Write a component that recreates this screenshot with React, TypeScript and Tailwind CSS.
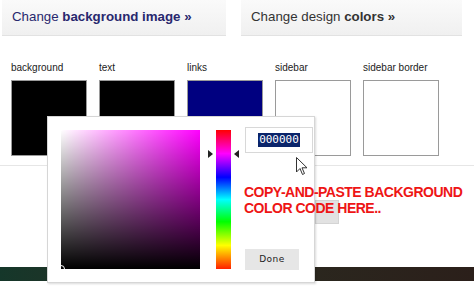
import React from "react";

const swatches = [
  { label: "background", color: "bg-black" },
  { label: "text", color: "bg-black" },
  { label: "links", color: "bg-[#000080]" },
  { label: "sidebar", color: "bg-white" },
  { label: "sidebar border", color: "bg-white" },
];

export default function App() {
  return (
    <div className="relative w-[474px] h-[288px] overflow-hidden bg-white font-['Liberation_Sans',Arial,sans-serif]">
      {/* tabs */}
      <div className="flex h-[36px]">
        <div className="ml-[2px] w-[224px] flex items-center pl-[10px] pb-[2px] bg-gradient-to-b from-[#fafafa] to-[#f0f0f0] border-b border-[#e2e2e2] text-[13.3px] text-[#28286e]">
          Change&nbsp;<b>background image »</b>
        </div>
        <div className="ml-[15px] w-[221px] flex items-center pl-[10px] pb-[2px] bg-gradient-to-b from-[#fafafa] to-[#f0f0f0] border-b border-[#e2e2e2] text-[13.3px] text-[#333]">
          Change design&nbsp;<b>colors »</b>
        </div>
      </div>

      {/* swatches */}
      <div className="flex gap-[12px] pl-[11px] pt-[26px]">
        {swatches.map((s) => (
          <div key={s.label} className="flex flex-col w-[76px]">
            <div className="text-[10px] leading-[12px] text-[#222] h-[18px]">{s.label}</div>
            <div className={`w-[76px] h-[76px] border border-[#9a9a9a] ${s.color}`} />
          </div>
        ))}
      </div>

      <div className="mt-[9px] border-t border-[#e6e6e6]" />

      <div className="flex justify-end pr-[135px] pt-[34px]">
        <div className="w-[24px] h-[24px] bg-[#e2e2e2] border border-[#d4d4d4]" />
      </div>

      <div className="mt-[43px] h-[14px] bg-gradient-to-r from-[#15372a] via-[#2a2a20] to-[#2b1f1a]" />

      {/* color picker popover */}
      <div className="absolute left-[47px] top-[116px] w-[268px] h-[167px] bg-white border border-[#d6d6d6] shadow-[1px_1px_2px_rgba(0,0,0,0.15)]">
        <div className="flex pt-[13px] pl-[13px]">
          <div className="relative w-[139px] h-[139px] bg-[#ff00ff]">
            <div className="absolute inset-0 bg-gradient-to-r from-white to-transparent" />
            <div className="absolute inset-0 bg-gradient-to-b from-transparent to-black" />
            <div className="absolute left-[-4px] bottom-[-4px] w-[8px] h-[8px] rounded-full border border-white" />
          </div>
          <div className="relative ml-[16px] w-[15px] h-[139px] bg-[linear-gradient(to_bottom,#ff0000_0%,#ff00ff_17%,#0000ff_34%,#00ffff_50%,#00ff00_66%,#ffff00_83%,#ff2000_100%)]">
            <div className="absolute left-[-8px] top-[20px] w-0 h-0 border-y-[4px] border-y-transparent border-l-[5px] border-l-[#222]" />
            <div className="absolute right-[-8px] top-[20px] w-0 h-0 border-y-[4px] border-y-transparent border-r-[5px] border-r-[#222]" />
          </div>
          <div className="ml-[14px] flex flex-col">
            <div className="mt-[-3px] w-[68px] h-[26px] border border-[#d8d8d8] flex items-center justify-center">
              <span className="bg-[#0a246a] text-white font-['DejaVu_Sans_Mono',monospace] text-[11px] leading-[14px] px-[1px]">000000</span>
            </div>
            <div className="mt-[96px] w-[54px] h-[21px] bg-[#e6e6e6] flex items-center justify-center text-[9px] tracking-[0.5px] text-[#222] font-['DejaVu_Sans',sans-serif]">
              Done
            </div>
          </div>
        </div>
      </div>

      {/* mouse cursor */}
      <svg className="absolute left-[296px] top-[157px]" width="12" height="19" viewBox="0 0 12 19">
        <path d="M0.5 0.5 L0.5 15 L4 11.5 L6.5 17.5 L8.5 16.5 L6 10.8 L11 10.8 Z" fill="white" stroke="#333" strokeWidth="1" />
      </svg>

      {/* annotation */}
      <div className="absolute left-[244px] top-[184px] text-[14px] leading-[16px] font-bold tracking-[-0.5px] text-[#ee1515] whitespace-nowrap">
        COPY-AND-PASTE BACKGROUND
        <br />
        COLOR CODE HERE..
      </div>
    </div>
  );
}
